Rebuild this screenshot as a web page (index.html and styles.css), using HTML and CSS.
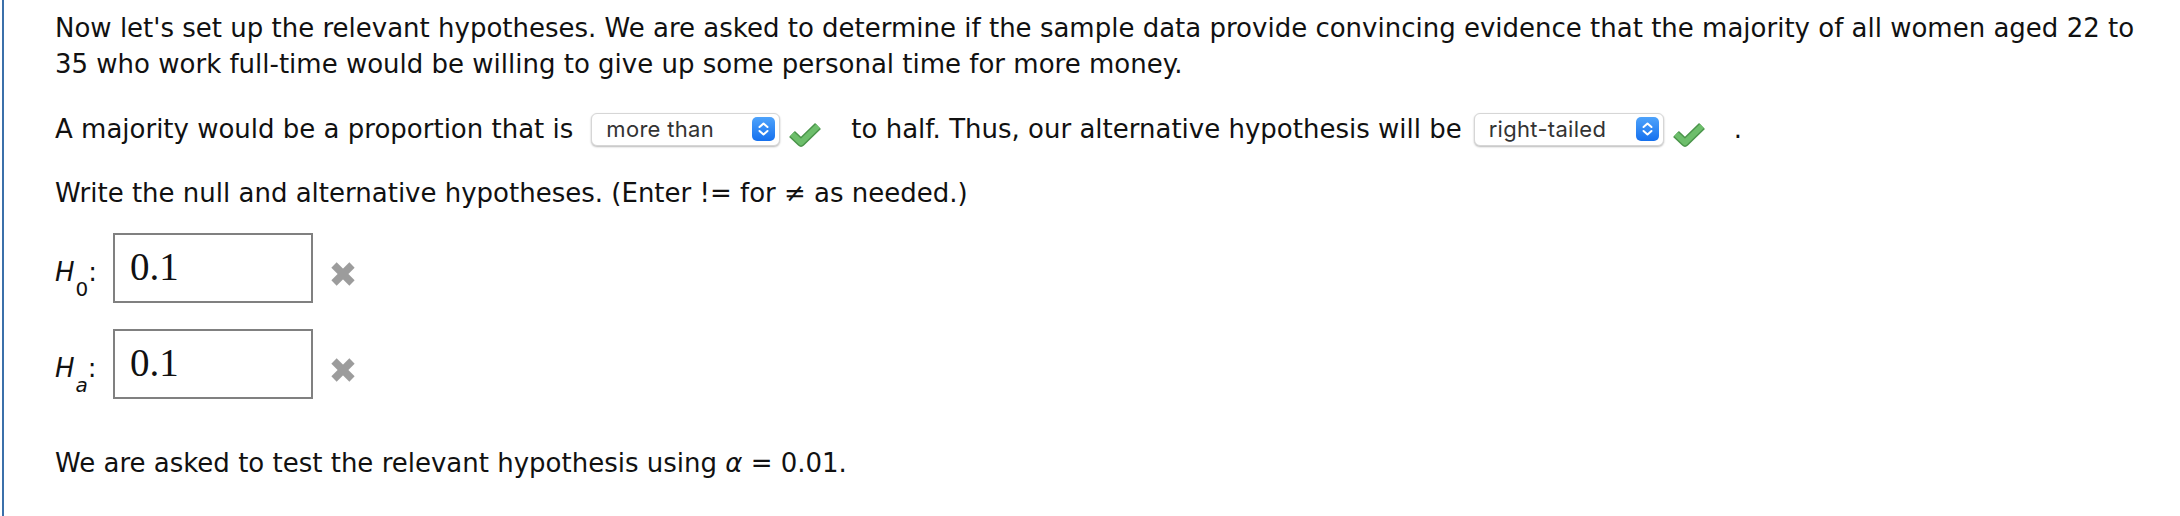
FILE: index.html
```html
<!DOCTYPE html>
<html>
<head>
<meta charset="utf-8">
<link rel="stylesheet" href="styles.css">
</head>
<body>
<div class="panel">
  <p class="intro">Now let's set up the relevant hypotheses. We are asked to determine if the sample data provide convincing evidence that the majority of all women aged 22 to 35 who work full-time would be willing to give up some personal time for more money.</p>
  <div class="choice-line">
    <span class="t1">A majority would be a proportion that is</span>
    <span class="select sel1"><span class="sel-text">more than</span><span class="sel-btn"><svg viewBox="0 0 23 24" width="23" height="24"><polyline points="7.5,10 11.5,6.5 15.5,10" /><polyline points="7.5,14 11.5,17.5 15.5,14" /></svg></span></span>
    <svg class="check" viewBox="0 0 36 26" width="36" height="26"><polyline class="ck-out" points="5,13 14,21.5 31,5" /><polyline class="ck-in" points="5,13 14,21.5 31,5" /></svg>
    <span class="t2">to half. Thus, our alternative hypothesis will be</span>
    <span class="select sel2"><span class="sel-text">right-tailed</span><span class="sel-btn"><svg viewBox="0 0 23 24" width="23" height="24"><polyline points="7.5,10 11.5,6.5 15.5,10" /><polyline points="7.5,14 11.5,17.5 15.5,14" /></svg></span></span>
    <svg class="check" viewBox="0 0 36 26" width="36" height="26"><polyline class="ck-out" points="5,13 14,21.5 31,5" /><polyline class="ck-in" points="5,13 14,21.5 31,5" /></svg>
    <span class="dot">.</span>
  </div>
  <p class="instr">Write the null and alternative hypotheses. (Enter != for ≠ as needed.)</p>
  <div class="hyp">
    <span class="label"><i class="hvar">H</i><span class="sub">0</span>:</span>
    <span class="box">0.1</span>
    <svg class="wrong" viewBox="0 0 30 28" width="30" height="28"><line x1="6" y1="5" x2="24" y2="23" /><line x1="24" y1="5" x2="6" y2="23" /></svg>
  </div>
  <div class="hyp hyp-a">
    <span class="label"><i class="hvar">H</i><i class="sub">a</i>:</span>
    <span class="box">0.1</span>
    <svg class="wrong" viewBox="0 0 30 28" width="30" height="28"><line x1="6" y1="5" x2="24" y2="23" /><line x1="24" y1="5" x2="6" y2="23" /></svg>
  </div>
  <p class="alpha">We are asked to test the relevant hypothesis using <i class="greek">α</i> = 0.01.</p>
</div>
</body>
</html>
```

FILE: styles.css
```css
html, body {
  margin: 0;
  background: #ffffff;
}

body {
  font-family: "DejaVu Sans", Verdana, sans-serif;
  font-size: 26px;
  color: #111111;
}

.panel {
  margin-left: 2px;
  border-left: 2px solid #3b70aa;
  padding: 10px 14px 0 51px;
  height: 516px;
  box-sizing: border-box;
}

.intro {
  margin: 0;
  line-height: 36px;
}

.choice-line {
  display: flex;
  align-items: center;
  margin-top: 29px;
  height: 36px;
  line-height: 36px;
  white-space: nowrap;
}

.select {
  display: flex;
  align-items: center;
  justify-content: space-between;
  flex: none;
  width: 189px;
  height: 33px;
  box-sizing: border-box;
  border: 1px solid #d6d6d6;
  border-radius: 6px;
  box-shadow: 0 1px 2px rgba(0, 0, 0, 0.28);
  background: #ffffff;
  padding: 0 4px 0 14px;
  font-family: Inter, "Liberation Sans", sans-serif;
  font-size: 22px;
  letter-spacing: 0.3px;
  color: #333333;
  line-height: 31px;
}

.sel1 {
  margin-left: 18px;
}

.sel2 {
  margin-left: 12px;
  width: 190px;
}

.sel-btn {
  display: flex;
  width: 23px;
  height: 24px;
  border-radius: 5px;
  background: linear-gradient(#4ea3fb, #1570ee);
}

.sel-btn polyline {
  fill: none;
  stroke: #ffffff;
  stroke-width: 2;
  stroke-linecap: round;
  stroke-linejoin: round;
}

.check {
  margin-left: 7px;
  margin-top: 9px;
  flex: none;
}

.ck-out {
  fill: none;
  stroke: #4a944a;
  stroke-width: 8.5;
  stroke-linejoin: round;
}

.ck-in {
  fill: none;
  stroke: #6dbe6b;
  stroke-width: 5.5;
  stroke-linejoin: round;
}

.t2 {
  margin-left: 28px;
}

.dot {
  margin-left: 27px;
}

.instr {
  margin: 28px 0 0;
  line-height: 36px;
}

.hyp {
  display: flex;
  align-items: center;
  margin-top: 22px;
  height: 70px;
}

.hyp-a {
  margin-top: 26px;
}

.label {
  width: 58px;
  height: 36px;
  margin-top: 8px;
  line-height: 36px;
  white-space: nowrap;
}

.hvar {
  font-style: italic;
}

.sub {
  font-size: 20px;
  vertical-align: -15px;
  margin-left: 1px;
  font-style: normal;
}

i.sub {
  font-style: italic;
}

.box {
  display: block;
  flex: none;
  width: 200px;
  height: 70px;
  box-sizing: border-box;
  border: 2px solid #808080;
  padding-left: 15px;
  font-family: "Liberation Serif", "Times New Roman", serif;
  font-size: 39px;
  line-height: 64px;
  color: #111111;
}

.wrong {
  margin-left: 15px;
  margin-top: 12px;
  flex: none;
  filter: blur(0.7px);
}

.wrong line {
  stroke: #9c9c9c;
  stroke-width: 7.5;
}

.alpha {
  margin: 46px 0 0;
  line-height: 36px;
}

.greek {
  font-style: italic;
}
```
